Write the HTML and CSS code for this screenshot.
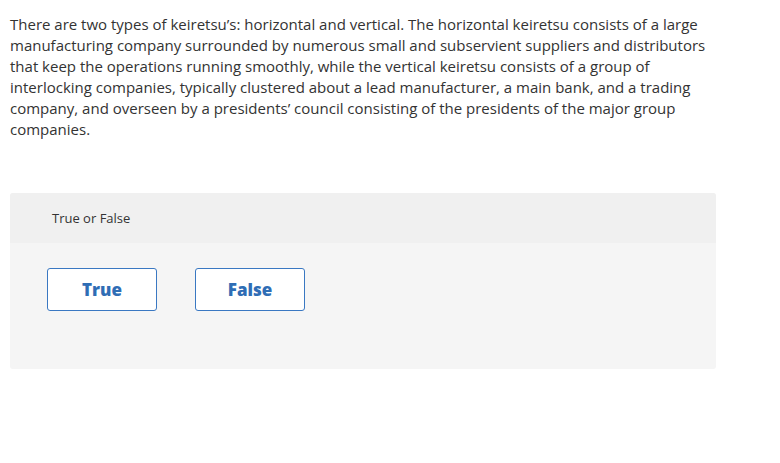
FILE: index.html
```html
<!DOCTYPE html>
<html>
<head>
<meta charset="utf-8">
<link rel="stylesheet" href="styles.css">
</head>
<body>
<div class="page">
  <p class="prompt">There are two types of keiretsu’s: horizontal and vertical. The horizontal keiretsu consists of a large manufacturing company surrounded by numerous small and subservient suppliers and distributors that keep the operations running smoothly, while the vertical keiretsu consists of a group of interlocking companies, typically clustered about a lead manufacturer, a main bank, and a trading company, and overseen by a presidents’ council consisting of the presidents of the major group companies.</p>
  <div class="card">
    <div class="card-head">True or False</div>
    <div class="card-body">
      <button class="choice">True</button>
      <button class="choice">False</button>
    </div>
  </div>
</div>
</body>
</html>
```
FILE: styles.css
```css
html, body {
  margin: 0;
  padding: 0;
  background: #ffffff;
}
.page {
  padding: 14px 0 0 10px;
  width: 706px;
  font-family: "Open Sans", "Liberation Sans", sans-serif;
  color: #333333;
}
.prompt {
  margin: 0;
  font-size: 15px;
  line-height: 21px;
  width: 700px;
}
.card {
  margin-top: 53px;
  width: 706px;
  border-radius: 3px;
  overflow: hidden;
  background: #f5f5f5;
}
.card-head {
  height: 50px;
  background: #f0f0f0;
  padding-left: 42px;
  font-size: 13px;
  line-height: 50px;
  color: #333333;
}
.card-body {
  display: flex;
  gap: 38px;
  padding: 25px 0 58px 37px;
}
.choice {
  width: 110px;
  height: 43px;
  box-sizing: border-box;
  background: #ffffff;
  border: 1px solid #3a78c2;
  border-radius: 3px;
  font-family: "Open Sans", "Liberation Sans", sans-serif;
  font-weight: 800;
  font-size: 17px;
  color: #2f6db5;
  padding: 0;
}
```
